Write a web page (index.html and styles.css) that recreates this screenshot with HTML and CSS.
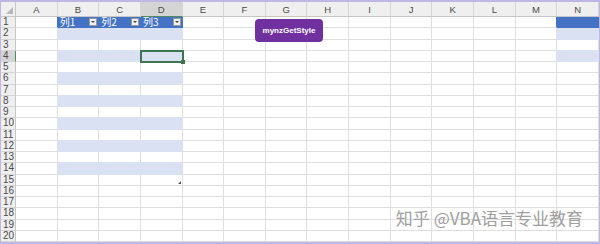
FILE: index.html
```html
<!DOCTYPE html>
<html lang="zh-CN">
<head>
	<meta charset="UTF-8">
	<title>mynzGetStyle</title>
	<link rel="stylesheet" href="styles.css">
</head>
<body>
	<div class="wrap">
		<div class="sheet">
			<div class="corner"></div>
			<div class="ch">A</div><div class="ch">B</div><div class="ch">C</div><div class="ch sel">D</div><div class="ch">E</div><div class="ch">F</div><div class="ch">G</div><div class="ch">H</div><div class="ch">I</div><div class="ch">J</div><div class="ch">K</div><div class="ch">L</div><div class="ch">M</div><div class="ch">N</div>
			<!-- 1 -->
			<div class="rh">1</div><div class="c pre-h"></div><div class="c th"><span>列1</span><i class="dd"></i></div><div class="c th"><span>列2</span><i class="dd"></i></div><div class="c th"><span>列3</span><i class="dd"></i></div><div class="c"></div><div class="c"></div><div class="c"></div><div class="c"></div><div class="c"></div><div class="c"></div><div class="c"></div><div class="c"></div><div class="c pre-h"></div><div class="c th"></div>
			<!-- 2 -->
			<div class="rh">2</div><div class="c pre"></div><div class="c band"></div><div class="c band"></div><div class="c band"></div><div class="c"></div><div class="c"></div><div class="c"></div><div class="c"></div><div class="c"></div><div class="c"></div><div class="c"></div><div class="c"></div><div class="c pre"></div><div class="c band"></div>
			<!-- 3 -->
			<div class="rh">3</div><div class="c"></div><div class="c wr"></div><div class="c wr"></div><div class="c wr"></div><div class="c"></div><div class="c"></div><div class="c"></div><div class="c"></div><div class="c"></div><div class="c"></div><div class="c"></div><div class="c"></div><div class="c"></div><div class="c wr"></div>
			<!-- 4 -->
			<div class="rh sel">4</div><div class="c pre"></div><div class="c band"></div><div class="c band"></div><div class="c band active"></div><div class="c"></div><div class="c"></div><div class="c"></div><div class="c"></div><div class="c"></div><div class="c"></div><div class="c"></div><div class="c"></div><div class="c pre"></div><div class="c band"></div>
			<!-- 5 -->
			<div class="rh">5</div><div class="c"></div><div class="c wr"></div><div class="c wr"></div><div class="c wr"></div><div class="c"></div><div class="c"></div><div class="c"></div><div class="c"></div><div class="c"></div><div class="c"></div><div class="c"></div><div class="c"></div><div class="c"></div><div class="c"></div>
			<!-- 6 -->
			<div class="rh">6</div><div class="c pre"></div><div class="c band"></div><div class="c band"></div><div class="c band"></div><div class="c"></div><div class="c"></div><div class="c"></div><div class="c"></div><div class="c"></div><div class="c"></div><div class="c"></div><div class="c"></div><div class="c"></div><div class="c"></div>
			<!-- 7 -->
			<div class="rh">7</div><div class="c"></div><div class="c wr"></div><div class="c wr"></div><div class="c wr"></div><div class="c"></div><div class="c"></div><div class="c"></div><div class="c"></div><div class="c"></div><div class="c"></div><div class="c"></div><div class="c"></div><div class="c"></div><div class="c"></div>
			<!-- 8 -->
			<div class="rh">8</div><div class="c pre"></div><div class="c band"></div><div class="c band"></div><div class="c band"></div><div class="c"></div><div class="c"></div><div class="c"></div><div class="c"></div><div class="c"></div><div class="c"></div><div class="c"></div><div class="c"></div><div class="c"></div><div class="c"></div>
			<!-- 9 -->
			<div class="rh">9</div><div class="c"></div><div class="c wr"></div><div class="c wr"></div><div class="c wr"></div><div class="c"></div><div class="c"></div><div class="c"></div><div class="c"></div><div class="c"></div><div class="c"></div><div class="c"></div><div class="c"></div><div class="c"></div><div class="c"></div>
			<!-- 10 -->
			<div class="rh">10</div><div class="c pre"></div><div class="c band"></div><div class="c band"></div><div class="c band"></div><div class="c"></div><div class="c"></div><div class="c"></div><div class="c"></div><div class="c"></div><div class="c"></div><div class="c"></div><div class="c"></div><div class="c"></div><div class="c"></div>
			<!-- 11 -->
			<div class="rh">11</div><div class="c"></div><div class="c wr"></div><div class="c wr"></div><div class="c wr"></div><div class="c"></div><div class="c"></div><div class="c"></div><div class="c"></div><div class="c"></div><div class="c"></div><div class="c"></div><div class="c"></div><div class="c"></div><div class="c"></div>
			<!-- 12 -->
			<div class="rh">12</div><div class="c pre"></div><div class="c band"></div><div class="c band"></div><div class="c band"></div><div class="c"></div><div class="c"></div><div class="c"></div><div class="c"></div><div class="c"></div><div class="c"></div><div class="c"></div><div class="c"></div><div class="c"></div><div class="c"></div>
			<!-- 13 -->
			<div class="rh">13</div><div class="c"></div><div class="c wr"></div><div class="c wr"></div><div class="c wr"></div><div class="c"></div><div class="c"></div><div class="c"></div><div class="c"></div><div class="c"></div><div class="c"></div><div class="c"></div><div class="c"></div><div class="c"></div><div class="c"></div>
			<!-- 14 -->
			<div class="rh">14</div><div class="c pre"></div><div class="c band"></div><div class="c band"></div><div class="c band"></div><div class="c"></div><div class="c"></div><div class="c"></div><div class="c"></div><div class="c"></div><div class="c"></div><div class="c"></div><div class="c"></div><div class="c"></div><div class="c"></div>
			<!-- 15 -->
			<div class="rh">15</div><div class="c"></div><div class="c"></div><div class="c"></div><div class="c end"></div><div class="c"></div><div class="c"></div><div class="c"></div><div class="c"></div><div class="c"></div><div class="c"></div><div class="c"></div><div class="c"></div><div class="c"></div><div class="c"></div>
			<!-- 16 -->
			<div class="rh">16</div><div class="c"></div><div class="c"></div><div class="c"></div><div class="c"></div><div class="c"></div><div class="c"></div><div class="c"></div><div class="c"></div><div class="c"></div><div class="c"></div><div class="c"></div><div class="c"></div><div class="c"></div><div class="c"></div>
			<!-- 17 -->
			<div class="rh">17</div><div class="c"></div><div class="c"></div><div class="c"></div><div class="c"></div><div class="c"></div><div class="c"></div><div class="c"></div><div class="c"></div><div class="c"></div><div class="c"></div><div class="c"></div><div class="c"></div><div class="c"></div><div class="c"></div>
			<!-- 18 -->
			<div class="rh">18</div><div class="c"></div><div class="c"></div><div class="c"></div><div class="c"></div><div class="c"></div><div class="c"></div><div class="c"></div><div class="c"></div><div class="c"></div><div class="c"></div><div class="c"></div><div class="c"></div><div class="c"></div><div class="c"></div>
			<!-- 19 -->
			<div class="rh">19</div><div class="c"></div><div class="c"></div><div class="c"></div><div class="c"></div><div class="c"></div><div class="c"></div><div class="c"></div><div class="c"></div><div class="c"></div><div class="c"></div><div class="c"></div><div class="c"></div><div class="c"></div><div class="c"></div>
			<!-- 20 -->
			<div class="rh">20</div><div class="c"></div><div class="c"></div><div class="c"></div><div class="c"></div><div class="c"></div><div class="c"></div><div class="c"></div><div class="c"></div><div class="c"></div><div class="c"></div><div class="c"></div><div class="c"></div><div class="c"></div><div class="c"></div>
		</div>
		<div class="btn">mynzGetStyle</div>
		<div class="mark">知乎 @VBA语言专业教育</div>
	</div>
</body>
</html>
```

FILE: styles.css
```css
*{margin:0;padding:0;box-sizing:border-box;}
body{width:600px;height:244px;overflow:hidden;background:#fff;font-family:"Liberation Sans","Noto Sans CJK SC",sans-serif;}
.wrap{position:relative;width:600px;height:244px;border:solid #bfb7e3;border-width:2px 1px 2px 1px;overflow:hidden;}
.sheet{display:grid;grid-template-columns:15px repeat(14,41.65px);grid-template-rows:15px repeat(20,11.25px);}

/* headers */
.corner{position:relative;background:#efefef;border-right:1px solid #c6c6c6;border-bottom:1px solid #c6c6c6;}
.corner::after{content:"";position:absolute;right:2px;bottom:2px;border-left:7px solid transparent;border-bottom:7px solid #b8b8b8;}
.ch{display:flex;align-items:center;justify-content:center;background:#efefef;border-right:1px solid #d6d6d6;border-bottom:1px solid #c6c6c6;font-size:9.5px;color:#4a4a4a;}
.ch.sel{background:#d4d4d4;border-bottom-color:#4f8a62;}
.rh{display:flex;align-items:center;padding-left:2px;background:#efefef;border-right:1px solid #c6c6c6;border-bottom:1px solid #d6d6d6;font-size:10px;line-height:1;color:#4a4a4a;}
.rh.sel{background:#d4d4d4;border-right-color:#4f8a62;}

/* cells */
.c{border-right:1px solid #dedede;border-bottom:1px solid #dedede;}
.c.pre{border-right-color:#d9e1f2;}
.c.pre-h{border-right-color:#4472c4;}
.c.band{background:#d9e1f2;border-color:#d9e1f2;}
.c.wr{border-bottom-color:#d9e1f2;}
.c.th{display:flex;align-items:center;padding-left:2px;background:#4472c4;border-color:#4472c4;color:#fff;font:10px/1 "Noto Sans CJK SC",sans-serif;}
.dd{display:flex;align-items:center;justify-content:center;margin-left:auto;margin-right:1px;width:8px;height:8px;background:#f1f1f1;border:1px solid #9a9a9a;}
.dd::after{content:"";border-left:2px solid transparent;border-right:2px solid transparent;border-top:2px solid #444;}
.c.active{position:relative;outline:2px solid #3d7552;outline-offset:-1px;}
.c.active::after{content:"";position:absolute;right:-3px;bottom:-3px;width:4px;height:4px;background:#3d7552;}
.c.end{position:relative;}
.c.end::after{content:"";position:absolute;right:1px;bottom:1px;border-left:3px solid transparent;border-bottom:3px solid #555;}

/* shape and watermark */
.btn{position:absolute;left:254px;top:17px;width:68px;height:23px;display:flex;align-items:center;justify-content:center;background:#7030a0;border-radius:4px;color:#fff;font:bold 8px "Liberation Sans",sans-serif;}
.mark{position:absolute;right:16px;top:207px;font:17px/1 "Noto Sans CJK SC",sans-serif;color:#a0a0a0;white-space:nowrap;}
```
